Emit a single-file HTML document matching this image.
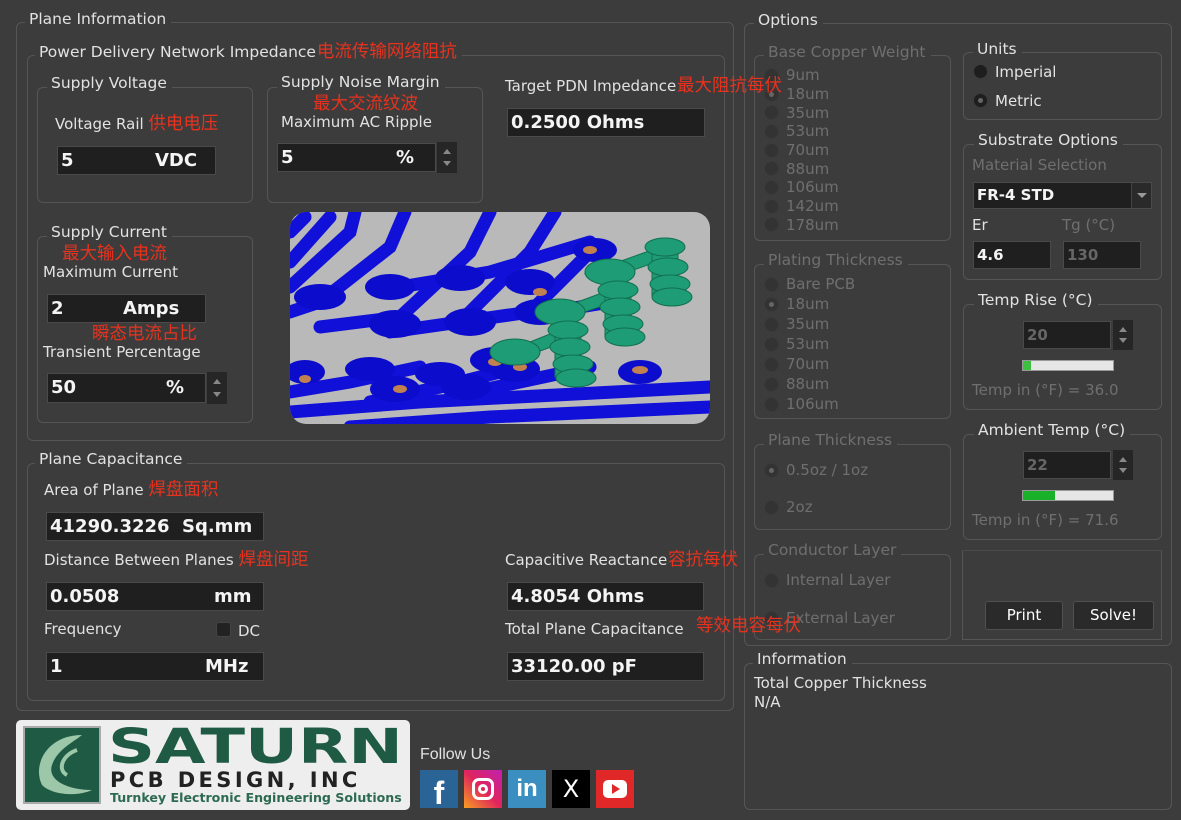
<!DOCTYPE html>
<html><head><meta charset="utf-8"><style>
*{margin:0;padding:0;box-sizing:border-box}
body{width:1181px;height:820px;background:#3c3c3c;position:relative;overflow:hidden;font-family:"DejaVu Sans","Liberation Sans","Noto Sans CJK SC",sans-serif;color:#e2e2e2;font-size:15px}
.b{position:absolute;border:1.5px solid #555;border-radius:6px}
.t{position:absolute;white-space:nowrap;line-height:18px}
.lg{position:absolute;white-space:nowrap;line-height:18px;background:#3c3c3c;padding:0 5px 0 4px;font-size:15.5px}
.d{color:#6f6f6f}
.r{color:#e8321e;font-family:"Noto Sans CJK SC",sans-serif;font-size:17.5px;position:relative;z-index:20}
.t.r{position:absolute}
.in{position:absolute;background:#1f1f1f;border:1px solid #4a4a4a;color:#f4f4f4;font-weight:bold;font-size:18px;line-height:27px;padding-left:3px;white-space:nowrap}
.in .u{position:absolute;top:0}
.sp{position:absolute;background:#262626;width:20px}
.sp:before{content:"";position:absolute;left:6px;top:7px;border:4px solid transparent;border-bottom:5px solid #888;border-top:0}
.sp:after{content:"";position:absolute;left:6px;bottom:7px;border:4px solid transparent;border-top:5px solid #888;border-bottom:0}
.rd{position:absolute;width:15px;height:15px;border-radius:50%;background:#333;border:1px solid #3a3a3a}
.rd.on:after{content:"";position:absolute;left:4px;top:4px;width:5px;height:5px;border-radius:50%;background:#666}
.ic{position:absolute;top:770px;width:38px;height:38px;color:#fff;font-weight:bold;text-align:center}
</style></head><body>

<div class="b" style="left:16px;top:22px;width:718px;height:689px"></div>
<div class="lg" style="left:25px;top:10px">Plane Information</div>

<div class="b" style="left:27px;top:55px;width:698px;height:386px"></div>
<div class="lg" style="left:35px;top:42px">Power Delivery Network Impedance <span class="r" style="margin-left:-4px">电流传输网络阻抗</span></div>

<div class="b" style="left:37px;top:87px;width:216px;height:116px"></div>
<div class="lg" style="left:47px;top:74px">Supply Voltage</div>
<div class="t" style="left:55px;top:114px">Voltage Rail <span class="r">供电电压</span></div>
<div class="in" style="left:57px;top:146px;width:159px;height:29px">5<span class="u" style="left:97px">VDC</span></div>

<div class="b" style="left:267px;top:87px;width:216px;height:116px"></div>
<div class="lg" style="left:277px;top:73px">Supply Noise Margin</div>
<div class="t r" style="left:313px;top:94px">最大交流纹波</div>
<div class="t" style="left:281px;top:113px">Maximum AC Ripple</div>
<div class="in" style="left:277px;top:143px;width:159px;height:29px">5<span class="u" style="left:118px">%</span></div>
<div class="sp" style="left:437px;top:142px;height:31px"></div>

<div class="t" style="left:505px;top:76px;z-index:20">Target PDN Impedance <span class="r" style="margin-left:-4px">最大阻抗每伏</span></div>
<div class="in" style="left:507px;top:108px;width:198px;height:29px">0.2500 Ohms</div>

<div class="b" style="left:37px;top:236px;width:216px;height:187px"></div>
<div class="lg" style="left:47px;top:223px">Supply Current</div>
<div class="t r" style="left:62px;top:244px">最大输入电流</div>
<div class="t" style="left:43px;top:263px">Maximum Current</div>
<div class="in" style="left:47px;top:294px;width:159px;height:29px">2<span class="u" style="left:75px">Amps</span></div>
<div class="t r" style="left:92px;top:324px">瞬态电流占比</div>
<div class="t" style="left:43px;top:343px">Transient Percentage</div>
<div class="in" style="left:47px;top:373px;width:159px;height:30px">50<span class="u" style="left:118px">%</span></div>
<div class="sp" style="left:207px;top:372px;height:32px"></div>

<svg style="position:absolute;left:290px;top:212px" width="420" height="212" viewBox="0 0 420 212">
<defs><clipPath id="c"><rect width="420" height="212" rx="16"/></clipPath></defs>
<g clip-path="url(#c)">
<rect width="420" height="212" fill="#b9b9b9"/>
<g stroke="#1010d8" stroke-linecap="round" fill="none" stroke-width="13">
<path d="M0 20 L15 5 M0 50 L40 5 M0 75 L60 20 L65 0"/>
<path d="M0 100 L30 90 L100 35 L115 0"/>
<path d="M30 115 L110 105 L180 40 L200 0"/>
<path d="M100 120 L170 110 L240 40 L265 0"/>
<path d="M170 110 L240 100 L300 40"/>
<path d="M110 75 L200 60 L300 30"/>
<path d="M260 100 L320 90"/>
<path d="M0 180 L60 170 L130 155 M80 190 L150 175 L230 155 M160 185 L230 170 L300 155"/>
<path d="M0 200 L130 190 L420 175 M60 215 L200 205 L420 195"/>
</g>
<g fill="#0c0ccc">
<ellipse cx="30" cy="85" rx="26" ry="13"/><ellipse cx="105" cy="112" rx="26" ry="14"/><ellipse cx="180" cy="110" rx="26" ry="14"/><ellipse cx="250" cy="100" rx="26" ry="13"/>
<ellipse cx="100" cy="75" rx="25" ry="13"/><ellipse cx="170" cy="66" rx="25" ry="13"/><ellipse cx="240" cy="70" rx="25" ry="13"/><ellipse cx="305" cy="38" rx="22" ry="12"/>
<ellipse cx="205" cy="148" rx="25" ry="13"/><ellipse cx="150" cy="162" rx="25" ry="12"/><ellipse cx="80" cy="157" rx="25" ry="12"/><ellipse cx="15" cy="160" rx="20" ry="12"/><ellipse cx="105" cy="177" rx="25" ry="13"/><ellipse cx="176" cy="175" rx="25" ry="13"/><ellipse cx="225" cy="157" rx="25" ry="13"/><ellipse cx="350" cy="160" rx="22" ry="12"/>
</g>
<g fill="#c08050"><ellipse cx="300" cy="38" rx="7" ry="4"/><ellipse cx="250" cy="80" rx="7" ry="4"/><ellipse cx="205" cy="150" rx="7" ry="4"/><ellipse cx="230" cy="155" rx="7" ry="4"/><ellipse cx="110" cy="177" rx="7" ry="4"/><ellipse cx="350" cy="158" rx="8" ry="4"/><ellipse cx="15" cy="167" rx="6" ry="4"/></g>
<g fill="#1e9c75" stroke="#117050" stroke-width="1">
<path d="M295 62 L370 35 L380 45 L310 70 Z"/><path d="M255 102 L320 78 L330 88 L265 110 Z"/><path d="M210 142 L270 118 L280 128 L220 150 Z"/>
<ellipse cx="320" cy="60" rx="25" ry="13"/><ellipse cx="270" cy="100" rx="25" ry="13"/><ellipse cx="225" cy="140" rx="25" ry="13"/>
<rect x="362" y="30" width="26" height="55"/><ellipse cx="375" cy="35" rx="20" ry="9"/><ellipse cx="378" cy="55" rx="20" ry="9"/><ellipse cx="380" cy="72" rx="20" ry="9"/><ellipse cx="382" cy="85" rx="20" ry="9"/>
<rect x="315" y="75" width="26" height="50"/><ellipse cx="328" cy="78" rx="20" ry="9"/><ellipse cx="330" cy="95" rx="20" ry="9"/><ellipse cx="333" cy="112" rx="20" ry="9"/><ellipse cx="335" cy="125" rx="20" ry="9"/>
<rect x="265" y="115" width="26" height="50"/><ellipse cx="278" cy="118" rx="20" ry="9"/><ellipse cx="280" cy="135" rx="20" ry="9"/><ellipse cx="283" cy="152" rx="20" ry="9"/><ellipse cx="286" cy="166" rx="20" ry="9"/>
</g>
</g></svg>

<div class="b" style="left:27px;top:463px;width:698px;height:238px"></div>
<div class="lg" style="left:35px;top:450px">Plane Capacitance</div>
<div class="t" style="left:44px;top:480px">Area of Plane <span class="r">焊盘面积</span></div>
<div class="in" style="left:46px;top:512px;width:218px;height:29px">41290.3226<span class="u" style="left:135px">Sq.mm</span></div>
<div class="t" style="left:44px;top:550px">Distance Between Planes <span class="r">焊盘间距</span></div>
<div class="in" style="left:46px;top:582px;width:218px;height:29px">0.0508<span class="u" style="left:167px">mm</span></div>
<div class="t" style="left:44px;top:620px">Frequency</div>
<div style="position:absolute;left:216px;top:622px;width:15px;height:15px;background:#222;border:1px solid #444;border-radius:3px"></div>
<div class="t" style="left:238px;top:622px">DC</div>
<div class="in" style="left:46px;top:652px;width:218px;height:29px">1<span class="u" style="left:158px">MHz</span></div>
<div class="t" style="left:505px;top:550px">Capacitive Reactance <span class="r" style="margin-left:-4px">容抗每伏</span></div>
<div class="in" style="left:507px;top:582px;width:197px;height:29px">4.8054 Ohms</div>
<div class="t" style="left:505px;top:620px">Total Plane Capacitance</div>
<div class="in" style="left:507px;top:652px;width:197px;height:29px">33120.00 pF</div>

<div style="position:absolute;left:16px;top:720px;width:394px;height:90px;background:#eeeeee;border-radius:5px"></div>
<svg style="position:absolute;left:22px;top:725px" width="80" height="80"><rect x="2" y="2" width="76" height="76" fill="#1f5a44" stroke="#aaa" stroke-width="2"/><path d="M60 10 C25 10 10 40 20 60 C30 70 55 72 70 65 C45 65 25 55 30 40 C35 25 50 18 60 10Z" fill="#9cc7a8"/><path d="M55 25 C40 30 35 45 45 50" stroke="#9cc7a8" stroke-width="4" fill="none"/></svg>
<div class="t" style="left:108px;top:722px;font-family:'DejaVu Sans',sans-serif;font-weight:bold;font-size:48px;line-height:50px;color:#1f5a44;transform:scaleX(1.36);transform-origin:left">SATURN</div>
<div class="t" style="left:110px;top:768px;font-weight:bold;font-size:21px;line-height:24px;color:#222;letter-spacing:3.4px">PCB DESIGN, INC</div>
<div class="t" style="left:110px;top:791px;font-weight:bold;font-size:12.6px;line-height:14px;color:#2d6a52">Turnkey Electronic Engineering Solutions</div>
<div class="t" style="left:420px;top:746px;font-family:'Liberation Sans',sans-serif;font-size:16px">Follow Us</div>
<div class="ic" style="left:420px;background:#2a6496;font-size:32px;line-height:46px;font-family:'Liberation Sans',sans-serif">f</div>
<div class="ic" style="left:464px;background:linear-gradient(45deg,#f8a020,#e0245e,#c020b0)"><div style="position:absolute;left:8px;top:8px;width:22px;height:22px;border:3px solid #fff;border-radius:7px"></div><div style="position:absolute;left:14px;top:14px;width:10px;height:10px;border:3px solid #fff;border-radius:50%"></div></div>
<div class="ic" style="left:508px;background:#3a8fc0;font-size:24px;line-height:38px;font-family:'Liberation Sans',sans-serif">in</div>
<div class="ic" style="left:552px;background:#000;font-size:24px;line-height:38px;font-weight:normal">X</div>
<div class="ic" style="left:596px;background:#e02828"><div style="position:absolute;left:7px;top:10px;width:24px;height:18px;background:#fff;border-radius:5px"></div><div style="position:absolute;left:16px;top:14px;border-left:8px solid #e02828;border-top:5px solid transparent;border-bottom:5px solid transparent"></div></div>

<div class="b" style="left:744px;top:23px;width:428px;height:623px"></div>
<div class="lg" style="left:754px;top:11px">Options</div>

<div class="b" style="left:754px;top:55px;width:197px;height:186px"></div>
<div class="lg d" style="left:764px;top:43px">Base Copper Weight</div>
<div class="rd" style="left:764px;top:68px"></div><div class="t d" style="left:786px;top:66px">9um</div>
<div class="rd on" style="left:764px;top:87px"></div><div class="t d" style="left:786px;top:85px">18um</div>
<div class="rd" style="left:764px;top:105px"></div><div class="t d" style="left:786px;top:104px">35um</div>
<div class="rd" style="left:764px;top:124px"></div><div class="t d" style="left:786px;top:122px">53um</div>
<div class="rd" style="left:764px;top:143px"></div><div class="t d" style="left:786px;top:141px">70um</div>
<div class="rd" style="left:764px;top:161px"></div><div class="t d" style="left:786px;top:160px">88um</div>
<div class="rd" style="left:764px;top:180px"></div><div class="t d" style="left:786px;top:178px">106um</div>
<div class="rd" style="left:764px;top:199px"></div><div class="t d" style="left:786px;top:197px">142um</div>
<div class="rd" style="left:764px;top:217px"></div><div class="t d" style="left:786px;top:216px">178um</div>

<div class="b" style="left:754px;top:264px;width:197px;height:155px"></div>
<div class="lg d" style="left:764px;top:251px">Plating Thickness</div>
<div class="rd" style="left:764px;top:277px"></div><div class="t d" style="left:786px;top:275px">Bare PCB</div>
<div class="rd on" style="left:764px;top:297px"></div><div class="t d" style="left:786px;top:295px">18um</div>
<div class="rd" style="left:764px;top:317px"></div><div class="t d" style="left:786px;top:315px">35um</div>
<div class="rd" style="left:764px;top:337px"></div><div class="t d" style="left:786px;top:335px">53um</div>
<div class="rd" style="left:764px;top:357px"></div><div class="t d" style="left:786px;top:355px">70um</div>
<div class="rd" style="left:764px;top:377px"></div><div class="t d" style="left:786px;top:375px">88um</div>
<div class="rd" style="left:764px;top:397px"></div><div class="t d" style="left:786px;top:395px">106um</div>

<div class="b" style="left:754px;top:444px;width:197px;height:86px"></div>
<div class="lg d" style="left:764px;top:431px">Plane Thickness</div>
<div class="rd on" style="left:764px;top:463px"></div><div class="t d" style="left:786px;top:461px">0.5oz / 1oz</div>
<div class="rd" style="left:764px;top:500px"></div><div class="t d" style="left:786px;top:498px">2oz</div>

<div class="b" style="left:754px;top:554px;width:197px;height:86px"></div>
<div class="lg d" style="left:764px;top:541px">Conductor Layer</div>
<div class="rd" style="left:764px;top:573px"></div><div class="t d" style="left:786px;top:571px">Internal Layer</div>
<div class="rd" style="left:764px;top:611px"></div><div class="t d" style="left:786px;top:609px">External Layer</div>

<div class="t r" style="left:696px;top:616px">等效电容每伏</div>

<div class="b" style="left:963px;top:52px;width:199px;height:68px"></div>
<div class="lg" style="left:973px;top:40px">Units</div>
<div class="rd" style="left:973px;top:64px;background:#1e1e1e"></div><div class="t" style="left:995px;top:63px">Imperial</div>
<div class="rd on" style="left:973px;top:93px;background:#1e1e1e"></div><div class="t" style="left:995px;top:92px">Metric</div>

<div class="b" style="left:963px;top:144px;width:199px;height:136px"></div>
<div class="lg" style="left:974px;top:131px">Substrate Options</div>
<div class="t d" style="left:972px;top:156px">Material Selection</div>
<div class="in" style="left:973px;top:182px;width:179px;height:27px;font-size:15px;line-height:25px">FR-4 STD<div style="position:absolute;right:0;top:0;width:20px;height:25px;background:#2a2a2a;border-left:1px solid #444"><div style="position:absolute;left:5px;top:10px;border:5px solid transparent;border-top:5px solid #999;border-bottom:0"></div></div></div>
<div class="t" style="left:972px;top:216px">Er</div>
<div class="t d" style="left:1062px;top:216px">Tg (°C)</div>
<div class="in" style="left:973px;top:241px;width:78px;height:28px;font-size:15px;line-height:26px">4.6</div>
<div class="in" style="left:1063px;top:241px;width:78px;height:28px;font-size:15px;line-height:26px;color:#666">130</div>

<div class="b" style="left:963px;top:304px;width:199px;height:106px"></div>
<div class="lg" style="left:974px;top:291px">Temp Rise (°C)</div>
<div class="in" style="left:1023px;top:321px;width:88px;height:28px;font-size:15px;line-height:26px;color:#666">20</div>
<div class="sp" style="left:1113px;top:320px;height:30px"></div>
<div style="position:absolute;left:1022px;top:360px;width:92px;height:11px;background:#e6e6e6;border:1px solid #999"><div style="width:8px;height:100%;background:#3fbf3f"></div></div>
<div class="t d" style="left:972px;top:381px">Temp in (°F) = 36.0</div>

<div class="b" style="left:963px;top:434px;width:199px;height:106px"></div>
<div class="lg" style="left:974px;top:421px">Ambient Temp (°C)</div>
<div class="in" style="left:1023px;top:451px;width:88px;height:28px;font-size:15px;line-height:26px;color:#666">22</div>
<div class="sp" style="left:1113px;top:450px;height:30px"></div>
<div style="position:absolute;left:1022px;top:490px;width:92px;height:11px;background:#e6e6e6;border:1px solid #999"><div style="width:32px;height:100%;background:#19b02a"></div></div>
<div class="t d" style="left:972px;top:511px">Temp in (°F) = 71.6</div>

<div style="position:absolute;left:962px;top:550px;width:200px;height:90px;border:1.5px solid #555;border-top-color:#4a4a4a"></div>
<div style="position:absolute;left:985px;top:601px;width:78px;height:29px;background:#2a2a2a;border:1px solid #505050;border-radius:3px;text-align:center;line-height:27px;color:#fff">Print</div>
<div style="position:absolute;left:1073px;top:601px;width:81px;height:29px;background:#2a2a2a;border:1px solid #505050;border-radius:3px;text-align:center;line-height:27px;color:#fff">Solve!</div>

<div class="b" style="left:744px;top:663px;width:428px;height:147px"></div>
<div class="lg" style="left:753px;top:650px">Information</div>
<div class="t" style="left:754px;top:674px">Total Copper Thickness</div>
<div class="t" style="left:754px;top:693px">N/A</div>
</body></html>
